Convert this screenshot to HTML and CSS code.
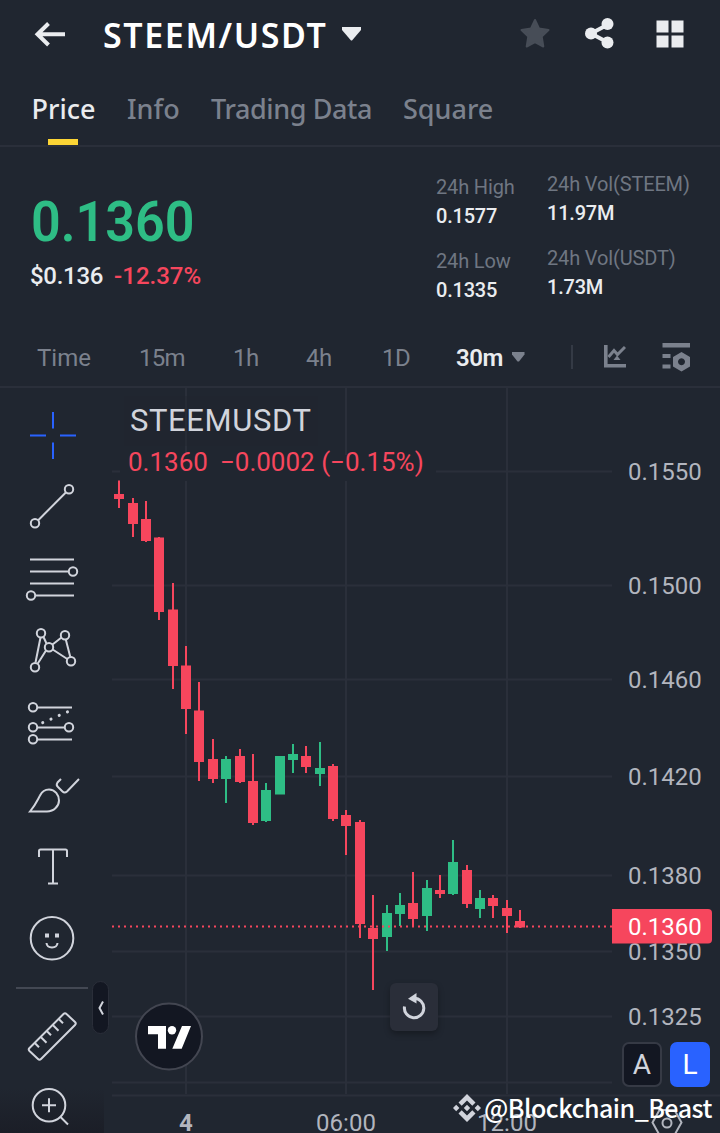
FILE: index.html
```html
<!DOCTYPE html>
<html lang="en">

<head>
    <meta charset="UTF-8">
    <meta name="viewport" content="width=device-width, initial-scale=1.0">
    <title>STEEM/USDT</title>
    <link rel="stylesheet" href="styles.css">
</head>

<body>
    <header class="header">
        <svg class="back" width="32" height="26" viewBox="34 20 32 26">
            <path d="M65 33.3H38M48.500 22.500L37.500 33.300L48.500 44" />
        </svg>
        <h1>STEEM/USDT</h1>
        <svg class="caret" width="20" height="14" viewBox="0 0 20 14">
            <path d="M0 0H19V3L10 13.500H9L0 3Z" />
        </svg>
        <div class="header-actions">
            <svg width="30" height="31" viewBox="0 0 30 31">
                <path class="star" d="M15 2L19 10.500L28.500 12L21.700 18.500L23.300 28.500L15 24L6.700 28.500L8.300 18.500L1.500 12L11 10.500Z" />
            </svg>
            <svg width="30" height="31" viewBox="0 0 30 31">
                <path class="share-line" d="M23 6.500L6 15.500L23 24.500" />
                <circle cx="22.500" cy="6" r="6" />
                <circle cx="6" cy="15.500" r="6" />
                <circle cx="22.500" cy="24.500" r="6" />
            </svg>
            <svg width="28" height="28" viewBox="0 0 28 28">
                <path d="M.5.5h12v12h-12zM15.500.5h12v12h-12zM.5 15.500h12v12h-12zM15.500 15.500h12v12h-12z" />
            </svg>
        </div>
    </header>

    <nav class="tabs">
        <a class="tab active t-price">Price</a>
        <a class="tab t-info">Info</a>
        <a class="tab t-data">Trading Data</a>
        <a class="tab t-square">Square</a>
    </nav>

    <section class="summary">
        <div class="price">
            <div class="last">0.1360</div>
            <div class="change"><span class="usd">$0.136</span><span class="pct">-12.37%</span></div>
        </div>
        <dl class="stats high-low">
            <dt>24h High</dt>
            <dd>0.1577</dd>
            <dt>24h Low</dt>
            <dd>0.1335</dd>
        </dl>
        <dl class="stats volume">
            <dt>24h Vol(STEEM)</dt>
            <dd>11.97M</dd>
            <dt>24h Vol(USDT)</dt>
            <dd>1.73M</dd>
        </dl>
    </section>

    <nav class="intervals">
        <span class="i-time">Time</span>
        <span class="i-15">15m</span>
        <span class="i-1h">1h</span>
        <span class="i-4h">4h</span>
        <span class="i-1d">1D</span>
        <span class="i-30 active">30m</span>
        <svg class="i-caret" width="13" height="10" viewBox="0 0 13 10">
            <path d="M0 0H12.500V2.500L7 9.500H5.500L0 2.500Z" />
        </svg>
        <i class="divider"></i>
        <svg class="i-chart" width="22" height="23" viewBox="0 0 22 23">
            <path class="stroke" d="M1.800 0V20.700H22" />
            <path class="stroke thin" d="M4.500 12L10 5.500L13.500 9.500L21 2" />
            <path d="M13 10.500L16.500 15H9.500Z" />
        </svg>
        <svg class="i-settings" width="29" height="30" viewBox="0 0 29 30">
            <path d="M.5 1h27.500v4.500H.5zM.5 12h8v4h-8zM.5 22.500h8v4h-8z" />
            <path fill-rule="evenodd" d="M19.500 10L28 15V24.500L19.500 29.500L11 24.500V15ZM19.500 16.300a3.500 3.500 0 1 0 .01 0Z" />
        </svg>
    </nav>

    <main class="chart">
        <aside class="tools">
            <svg viewBox="0 0 104 72">
                <path class="cross" d="M53 12V28.500M53 42.500V59M30 35.500H46M60 35.500H76" />
            </svg>
            <svg viewBox="0 0 104 72">
                <path d="M38.200 48.200L65.800 20.500" />
                <circle cx="69" cy="17.300" r="4.200" />
                <circle cx="35" cy="51.300" r="4.200" />
            </svg>
            <svg viewBox="0 0 104 72">
                <path d="M30 15.500H74M30 27.500H69M30 39.500H74M35 51.500H74" />
                <circle cx="73" cy="27.500" r="4.200" />
                <circle cx="31" cy="51.500" r="4.200" />
            </svg>
            <svg viewBox="0 0 104 72">
                <path d="M40.500 21.500L35.500 46.500M43.500 21L46.500 27.500M52.500 28.500L61.500 21.500M65.800 23.500L70.300 41M52.700 33.500L67.300 43M46 34.500L37.800 47.500" />
                <circle cx="41" cy="17.300" r="4.200" />
                <circle cx="65" cy="19.300" r="4.200" />
                <circle cx="49" cy="31.300" r="4.200" />
                <circle cx="71" cy="45.300" r="4.200" />
                <circle cx="35" cy="51.300" r="4.200" />
            </svg>
            <svg viewBox="0 0 104 72">
                <path d="M37.200 19.500H72M37.200 39.500H65M37.200 51.500H72" />
                <path class="dots" d="M42.700 34.700L67.500 23.800" />
                <circle cx="33" cy="19.300" r="4.200" />
                <circle cx="33" cy="39.300" r="4.200" />
                <circle cx="69" cy="39.300" r="4.200" />
                <circle cx="33" cy="51.300" r="4.200" />
            </svg>
            <svg viewBox="0 0 104 72">
                <path d="M30 51.500C36 44 37 41 40 35.500C42 31.500 45 29.500 49 29.500C55 29.500 59 35 59 40.500C59 46 54 51.500 47 51.500Z" />
                <path d="M61 19L57.500 22.500C56.500 24 56.800 26 58 27L62.500 31.500C64 33 65.500 32.800 67 31.500L79 19" />
            </svg>
            <svg viewBox="0 0 104 72">
                <path d="M39 25V19Q39 17.500 40.500 17.500H65.500Q67 17.500 67 19V25M53 17.500V51.500M48 51.500H58" />
            </svg>
            <svg viewBox="0 0 104 72">
                <circle cx="52" cy="34.300" r="21.300" />
                <path d="M46.500 39C47 45 57 45 57.500 39" />
                <path class="solid" d="M45 29.500h4v4h-4zM55 29.500h4v4h-4z" />
            </svg>
            <hr>
            <svg viewBox="0 0 104 72">
                <path d="M29.500 48L63.500 14Q65 12.500 66.500 14L75 22Q76.500 23.500 75 25L41 59Q39.500 60.500 38 59L29.500 51Q28 49.500 29.500 48Z" />
                <path d="M35 43.300l4 4M41 37.300l5.500 5.500M47 31.300l4 4M53 25.300l5.500 5.500M59 19.300l4 4" />
            </svg>
            <svg viewBox="0 0 104 72">
                <circle cx="49" cy="33.300" r="16.300" />
                <path d="M42 33.300H56M49 26.300V40.300M60.500 45L68 52.500" />
            </svg>
        </aside>

        <!-- user units are page pixels; bodies and wicks are strokes of different width -->
        <svg class="plot" width="616" height="745" viewBox="104 388 616 745">
            <path class="grid" d="M186 388V1094M346 388V1094M507 388V1094M112 471.500H612M112 585.500H612M112 679.500H612M112 776.500H612M112 875.500H612M112 951.500H612M112 1016.500H612M112 1082.500H612M112 1095.500H720" />
            <rect class="legend-shade" x="124" y="396" width="194" height="50" />
            <rect class="legend-bg" x="120" y="455" width="316" height="26" />

            <path class="wick down" d="M119 480.500V508M133 498V537M146 501V542M159 537V620M173 583V689M186 646V734M199 682V781M213 739V783M240 749V783M253 754V825M306 746V773M333 764V821M346 810V855M360 820V938M373 895V990M413 872V927M440 875V898M467 865V908M493 895V918M507 900V933M520 910V928" />
            <path class="body down" d="M119 494V499M133 503V524M146 519V541M159 537.500V612M173 609.500V666M186 665.500V709M199 710.500V762M213 759V779M240 756V782M253 781V823M306 756V767M333 766V819M346 815V826M360 822V924M373 928V939M413 903V919M440 890V894M467 870V904M493 898V906M507 908V916M520 921V927.500" />
            <path class="wick up" d="M226 756V803M266 783V822M293 744V773M320 742V786M387 905V951M400 893V926M427 880V931M453 840V895M480 890V918" />
            <path class="body up" d="M226 759V779M266 790V821M280 756V794.500M293 754V760M320 768V774M387 913V937M400 905V914M427 888V916M453 862V894M480 898V909" />
            <path class="last-line" d="M112 926.500H612" />

            <g class="axis">
                <text x="628" y="480">0.1550</text>
                <text x="628" y="594">0.1500</text>
                <text x="628" y="688">0.1460</text>
                <text x="628" y="785">0.1420</text>
                <text x="628" y="884">0.1380</text>
                <text x="628" y="960">0.1350</text>
                <text x="628" y="1025">0.1325</text>
            </g>
            <path class="tag" d="M612 909H708Q712 909 712 913V939.500Q712 943.500 708 943.500H612Z" />
            <text class="tag-text" x="628" y="935">0.1360</text>
            <g class="axis time">
                <text class="day" x="186" y="1131">4</text>
                <text x="346" y="1131">06:00</text>
                <text x="507" y="1131">12:00</text>
            </g>
            <path class="hex" d="M659.500 1110H674.500L681.500 1122.500L674.500 1135H659.500L652.500 1122.500Z" />
            <circle class="hex" cx="667" cy="1123" r="4.500" />

            <circle class="tv" cx="169" cy="1036.500" r="33" />
            <path class="tv-mark" d="M148 1026H166V1048.700H158V1034.300H148ZM182 1026H191L181.700 1048.700H172.300Z" />
            <circle class="tv-mark" cx="172" cy="1030.300" r="4.200" />
        </svg>

        <div class="legend">
            <div class="symbol">STEEMUSDT</div>
            <div class="values"><span>0.1360</span><span>−0.0002 (−0.15%)</span></div>
        </div>

        <button class="collapse">
            <svg width="6" height="16" viewBox="0 0 6 16">
                <path d="M5 1.500L1.500 8L5 14.500" />
            </svg>
        </button>
        <button class="reset">
            <svg width="24" height="28" viewBox="402 994 24 28">
                <path class="arc" d="M404.500 1007.500A9.700 9.700 0 1 0 414 999.300" />
                <path d="M408 999.800L416.500 994V1004.500Z" />
            </svg>
        </button>
        <div class="scale">
            <button>A</button>
            <button class="on">L</button>
        </div>

        <div class="watermark">
            <svg width="28" height="28" viewBox="0 0 28 28">
                <path d="M14 0L22.500 8.500L19.300 11.700L14 6.400L8.700 11.700L5.500 8.500ZM14 28L22.500 19.500L19.300 16.300L14 21.600L8.700 16.300L5.500 19.500ZM14 10.800L17.200 14L14 17.200L10.800 14ZM3.200 10.800L6.400 14L3.200 17.200L0 14ZM24.800 10.800L28 14L24.800 17.200L21.600 14Z" />
            </svg>
            <span>@Blockchain_Beast</span>
        </div>
    </main>
</body>

</html>
```
FILE: styles.css
```css
:root {
    --bg: #202630;
    --line: #2a2f3a;
    --text: #eaecef;
    --dim: #7b818d;
    --up: #2ebd85;
    --down: #f6465d;
    --yellow: #fcd535;
    --tv-dark: #131722;
    --tv-text: #d1d4dc;
    --tv-axis: #b2b5be;
    --blue: #2962ff;
}

* {
    box-sizing: border-box;
}

body {
    margin: 0;
    width: 720px;
    height: 1133px;
    overflow: hidden;
    background: var(--bg);
    color: var(--text);
    font-family: Roboto, "Liberation Sans", sans-serif;
    display: flex;
    flex-direction: column;
}

svg {
    display: block;
    flex: none;
    fill: currentColor;
}

button {
    border: 0;
    padding: 0;
    font: inherit;
    color: inherit;
    display: flex;
    align-items: center;
    justify-content: center;
}

/* header */

.header {
    height: 67px;
    padding: 0 36px 0 34px;
    display: flex;
    align-items: center;
}

.back path {
    fill: none;
    stroke: currentColor;
    stroke-width: 4;
}

h1 {
    margin: 2px 0 0 37px;
    width: 225px;
    color: #fff;
    font-family: "Noto Sans", sans-serif;
    font-size: 34px;
    font-weight: 600;
    line-height: 40px;
    letter-spacing: 1.6px;
    white-space: nowrap;
}

.caret {
    margin-left: 14px;
}

.header-actions {
    margin-left: auto;
    display: flex;
    align-items: center;
    gap: 35px;
}

.header-actions svg + svg + svg {
    margin-left: 6px;
}

.star {
    fill: #474d57;
    stroke: #474d57;
    stroke-width: 2;
    stroke-linejoin: round;
}

.share-line {
    fill: none;
    stroke: currentColor;
    stroke-width: 4;
}

/* tabs */

.tabs {
    height: 80px;
    padding-left: 31px;
    border-bottom: 2px solid var(--line);
    display: flex;
    gap: 31px;
}

.tab {
    height: 78px;
    padding-top: 22px;
    color: var(--dim);
    font-family: "Noto Sans", sans-serif;
    font-size: 27px;
    font-weight: 500;
    line-height: 40px;
    white-space: nowrap;
}

.tab.active {
    color: var(--text);
    display: flex;
    flex-direction: column;
    align-items: center;
}

.tab.active::after {
    content: "";
    width: 30px;
    height: 6px;
    margin-top: 10px;
    margin-right: 2px;
    background: var(--yellow);
}

.t-price { width: 65px; }
.t-info { width: 53px; }

.t-data {
    width: 161px;
    letter-spacing: -.4px;
}

/* price summary */

.summary {
    height: 180px;
    padding-left: 31px;
    display: flex;
}

.price {
    width: 405px;
    padding-top: 45px;
}

/* digits are drawn condensed */
.last {
    color: var(--up);
    font-size: 56px;
    font-weight: 600;
    line-height: 60px;
    transform: scaleX(.93);
    transform-origin: 0 0;
}

.change {
    margin: 10px 0 0 -1px;
    display: flex;
    gap: 11px;
    font-size: 24px;
    font-weight: 500;
    line-height: 28px;
    letter-spacing: -.3px;
}

.pct {
    color: var(--down);
    letter-spacing: 0;
}

.stats {
    margin: 0;
    padding-top: 27px;
    width: 111px;
    font-size: 20px;
    white-space: nowrap;
}

.stats.volume {
    padding-top: 24px;
    width: 150px;
}

.stats dt {
    color: #6f7682;
    line-height: 26px;
    letter-spacing: -.15px;
}

.stats dd {
    margin: 3px 0 19px;
    line-height: 26px;
    font-weight: 500;
    letter-spacing: -.2px;
}

/* interval bar */

.intervals {
    height: 61px;
    padding-left: 37px;
    border-bottom: 2px solid var(--line);
    display: flex;
    align-items: center;
    color: var(--dim);
    font-size: 24px;
}

.intervals span {
    padding-top: 2px;
    white-space: nowrap;
}

.i-time { width: 102px; }
.i-15 { width: 94px; letter-spacing: -.7px; }
.i-1h { width: 73px; letter-spacing: -.6px; }
.i-4h { width: 76px; letter-spacing: -.6px; }
.i-1d { width: 74px; letter-spacing: -.6px; }
.i-30 { width: 56px; letter-spacing: -.5px; }

.intervals .active {
    color: var(--text);
    font-weight: 600;
}

.divider {
    width: 2px;
    height: 24px;
    margin: 0 31px 0 46px;
    background: #343a45;
}

.i-chart .stroke {
    fill: none;
    stroke: currentColor;
    stroke-width: 3.6;
}

.i-chart .thin {
    stroke-width: 3;
}

.i-settings {
    margin-left: 36px;
}

/* chart */

.chart {
    position: relative;
    height: 745px;
    display: flex;
}

.tools {
    width: 104px;
    height: 745px;
    padding-top: 12px;
    overflow: hidden;
    background: linear-gradient(transparent 700px, #1b1e27 745px);
}

.tools svg {
    width: 104px;
    height: 72px;
    fill: none;
    stroke: var(--tv-text);
    stroke-width: 2;
}

.tools .cross {
    stroke: var(--blue);
}

.tools .dots {
    stroke-width: 3;
    stroke-linecap: round;
    stroke-dasharray: .1 8.900;
}

.tools .solid {
    fill: var(--tv-text);
    stroke: none;
}

.tools hr {
    width: 72px;
    height: 2px;
    margin: 11px 0 11px 16px;
    border: 0;
    background: #434853;
}

.grid {
    fill: none;
    stroke: var(--line);
    stroke-width: 2;
}

.legend-bg {
    fill: var(--bg);
}

.legend-shade {
    fill: var(--bg);
    opacity: .4;
}

.wick { stroke-width: 2; }
.body { stroke-width: 10; }
.up { stroke: var(--up); }
.down { stroke: var(--down); }

.last-line {
    stroke: var(--down);
    stroke-width: 2;
    stroke-dasharray: 2 4;
}

.axis {
    fill: var(--tv-axis);
    font-size: 24px;
}

.time {
    text-anchor: middle;
}

.day {
    font-weight: 700;
}

.tag {
    fill: var(--down);
}

.tag-text {
    fill: #fff;
    font-size: 24px;
}

.hex {
    fill: none;
    stroke: var(--tv-axis);
    stroke-width: 2;
}

.tv {
    fill: var(--tv-dark);
    stroke: #434651;
    stroke-width: 2;
}

.tv-mark {
    fill: #fff;
}

.legend {
    position: absolute;
    left: 128px;
    top: 14px;
    white-space: nowrap;
}

.symbol {
    padding-left: 2px;
    color: var(--tv-text);
    font-size: 31px;
    line-height: 38px;
    letter-spacing: .6px;
}

.values {
    margin-top: 7px;
    display: flex;
    gap: 12px;
    color: var(--down);
    font-size: 26px;
    line-height: 30px;
}

.collapse {
    position: absolute;
    left: 92px;
    top: 593px;
    width: 17px;
    height: 53px;
    border: 1px solid #2a2e39;
    border-radius: 9px;
    background: var(--tv-dark);
}

.collapse path {
    fill: none;
    stroke: var(--tv-text);
    stroke-width: 2;
}

.reset {
    position: absolute;
    left: 390px;
    top: 595px;
    width: 48px;
    height: 48px;
    border-radius: 6px;
    color: var(--tv-text);
    background: #2a2e39;
    box-shadow: 0 3px 6px rgba(0, 0, 0, .3);
}

.reset .arc {
    fill: none;
    stroke: currentColor;
    stroke-width: 3;
}

.scale {
    position: absolute;
    left: 622px;
    top: 654px;
    display: flex;
    gap: 8px;
}

.scale button {
    width: 40px;
    height: 45px;
    border: 2px solid #363a45;
    border-radius: 7px;
    background: var(--tv-dark);
    color: var(--tv-text);
    font-size: 28px;
}

.scale .on {
    border-color: var(--blue);
    background: var(--blue);
    color: #fff;
}

.watermark {
    position: absolute;
    left: 453px;
    top: 703px;
    display: flex;
    align-items: center;
    gap: 3px;
    color: #fff;
    font-family: "Noto Sans CJK SC", sans-serif;
    font-size: 25px;
    font-weight: 500;
    line-height: 36px;
    letter-spacing: -.5px;
}

.watermark span {
    margin-top: -2px;
}

.watermark svg {
    color: var(--tv-text);
}
```
